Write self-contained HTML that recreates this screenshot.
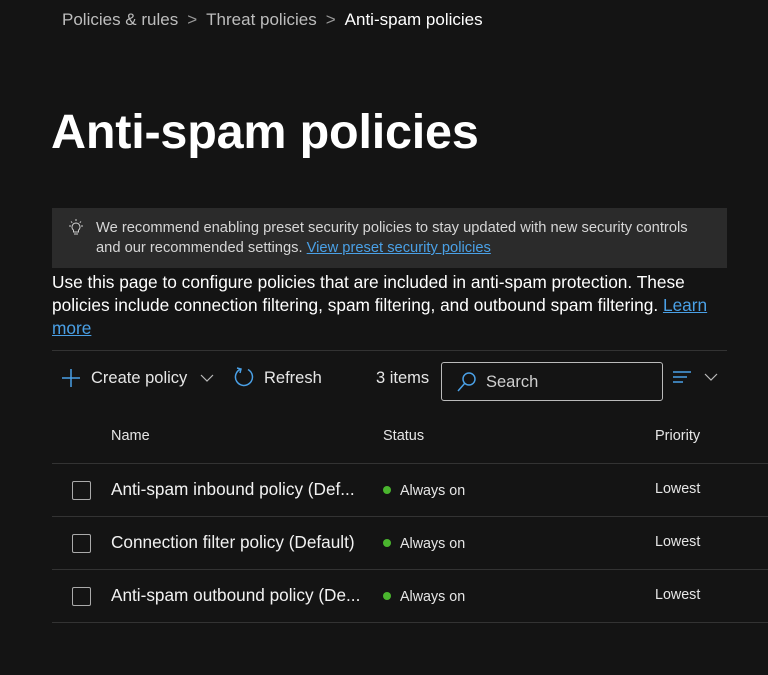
<!DOCTYPE html>
<html><head><meta charset="utf-8"><style>
*{margin:0;padding:0;box-sizing:border-box}
body{width:768px;height:675px;background:#141414;color:#fff;font-family:"Liberation Sans",sans-serif;position:relative;overflow:hidden}
.a{position:absolute;white-space:nowrap}
.bc{top:10px;left:62px;font-size:17px;color:#bdbdbd}
.bc span{margin:0 9px;color:#999}
.title{top:104px;left:51px;font-size:48.5px;font-weight:bold;letter-spacing:-0.2px}
.banner{position:absolute;left:52px;top:208px;width:675px;height:60px;background:#2b2b2b}
.bt{left:96px;font-size:14.7px;color:#d6d6d6}
a{color:#4aa0e6;text-decoration:underline}
.body{left:52px;top:271px;font-size:17.3px;line-height:23px;color:#fff}
.hr{position:absolute;height:1px;background:#333}
.tb{font-size:16.5px;color:#e6e6e6;top:369px}
.hd{font-size:14.5px;color:#e6e6e6;top:428px}
.cb{position:absolute;left:72px;width:19px;height:19px;border:1.5px solid #aaa;border-radius:2px}
.nm{left:111px;font-size:17.2px;color:#f2f2f2}
.st{left:400px;font-size:14.3px;color:#e6e6e6}
.dot{position:absolute;left:383px;width:8px;height:8px;border-radius:50%;background:#4ab52e}
.pr{left:655px;font-size:14.3px;color:#e6e6e6}
</style></head><body>
<div class="a bc">Policies &amp; rules<span>&gt;</span>Threat policies<span>&gt;</span><b style="color:#fff;font-weight:normal">Anti-spam policies</b></div>
<div class="a title">Anti-spam policies</div>
<div class="banner"></div>
<svg class="a" style="left:66px;top:218px" width="20" height="20" viewBox="0 0 20 20" fill="none" stroke="#ccc" stroke-width="1"><path d="M10 5a4 4 0 0 0-2.5 7.1V14h5v-1.9A4 4 0 0 0 10 5zM8 16h4M10 1v2M3 8h2M15 8h2M5 3.5l1.2 1.2M15 3.5l-1.2 1.2"/></svg>
<div class="a bt" style="top:220px">We recommend enabling preset security policies to stay updated with new security controls</div>
<div class="a bt" style="top:240px">and our recommended settings. <a>View preset security policies</a></div>
<div class="a body">Use this page to configure policies that are included in anti-spam protection. These<br>policies include connection filtering, spam filtering, and outbound spam filtering. <a>Learn</a><br><a>more</a></div>
<div class="hr" style="left:52px;top:350px;width:675px"></div>
<svg class="a" style="left:61px;top:368px" width="20" height="20" stroke="#4aa0e6" stroke-width="1.5"><path d="M10 1v18M1 10h18"/></svg>
<div class="a tb" style="left:91px">Create policy</div>
<svg class="a" style="left:200px;top:373px" width="14" height="10" fill="none" stroke="#bbb" stroke-width="1.2"><path d="M1 2l6 6 6-6"/></svg>
<svg class="a" style="left:233px;top:366px" width="22" height="22" fill="none" stroke="#4aa0e6" stroke-width="1.5"><path d="M8 3A8.5 8.5 0 1 0 15 3.5M4 2l4 1-1 4"/></svg>
<div class="a tb" style="left:264px">Refresh</div>
<div class="a tb" style="left:376px">3 items</div>
<div style="position:absolute;left:441px;top:362px;width:222px;height:39px;border:1.2px solid #bbb;border-radius:3px"></div>
<svg class="a" style="left:455px;top:370px" width="24" height="24" fill="none" stroke="#4aa0e6" stroke-width="1.5"><circle cx="14" cy="9" r="6"/><path d="M10 13l-7 8"/></svg>
<div class="a tb" style="left:486px;top:373px;color:#cfcfcf">Search</div>
<svg class="a" style="left:673px;top:370px" width="48" height="16" fill="none" stroke-width="1.5"><path d="M0 2h18M0 7h14M0 12h10" stroke="#4aa0e6"/><path d="M32 4l6 6 6-6" stroke="#bbb" stroke-width="1.2"/></svg>
<div class="a hd" style="left:111px">Name</div>
<div class="a hd" style="left:383px">Status</div>
<div class="a hd" style="left:655px">Priority</div>
<div class="hr" style="left:52px;top:463px;width:716px"></div>
<div class="hr" style="left:52px;top:516px;width:716px"></div>
<div class="hr" style="left:52px;top:569px;width:716px"></div>
<div class="hr" style="left:52px;top:622px;width:716px"></div>

<div class="cb" style="top:481px"></div><div class="a nm" style="top:479px">Anti-spam inbound policy (Def...</div><div class="dot" style="top:486px"></div><div class="a st" style="top:483px">Always on</div><div class="a pr" style="top:481px">Lowest</div>
<div class="cb" style="top:534px"></div><div class="a nm" style="top:532px">Connection filter policy (Default)</div><div class="dot" style="top:539px"></div><div class="a st" style="top:536px">Always on</div><div class="a pr" style="top:534px">Lowest</div>
<div class="cb" style="top:587px"></div><div class="a nm" style="top:585px">Anti-spam outbound policy (De...</div><div class="dot" style="top:592px"></div><div class="a st" style="top:589px">Always on</div><div class="a pr" style="top:587px">Lowest</div>
</body></html>
